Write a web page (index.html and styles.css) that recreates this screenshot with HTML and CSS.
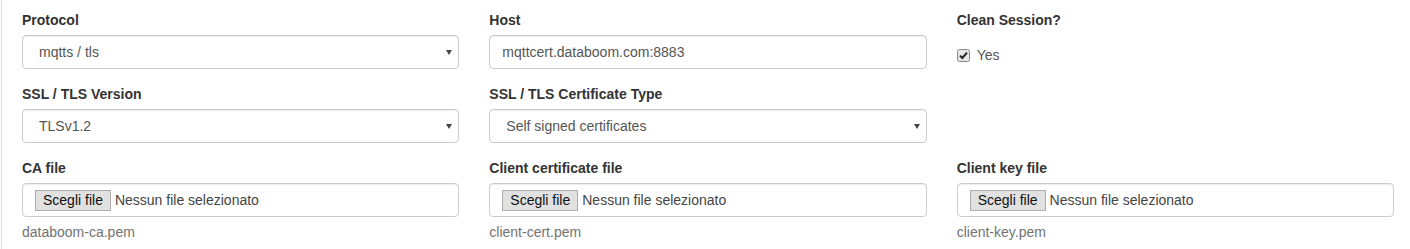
FILE: index.html
```html
<!DOCTYPE html>
<html lang="it">
<head>
<meta charset="utf-8">
<title>MQTT connection</title>
<link rel="stylesheet" href="styles.css">
</head>
<body>
<div class="panel">
  <form class="grid">
    <div class="form-group">
      <label class="control-label">Protocol</label>
      <div class="select-wrap">
        <select class="form-control"><option>mqtts / tls</option></select>
      </div>
    </div>
    <div class="form-group">
      <label class="control-label">Host</label>
      <input class="form-control" type="text" value="mqttcert.databoom.com:8883">
    </div>
    <div class="form-group">
      <label class="control-label">Clean Session?</label>
      <div class="checkbox">
        <label class="check-label">
          <span class="check-box"><svg width="13" height="13" viewBox="0 0 13 13"><rect x="0.5" y="0.5" width="12" height="12" rx="2" fill="#e5e5e5" stroke="#8a8a8a"/><path d="M3 6.6 L5.3 9 L10 3.6" fill="none" stroke="#222" stroke-width="2"/></svg></span>
          Yes
        </label>
      </div>
    </div>

    <div class="form-group">
      <label class="control-label">SSL / TLS Version</label>
      <div class="select-wrap">
        <select class="form-control"><option>TLSv1.2</option></select>
      </div>
    </div>
    <div class="form-group">
      <label class="control-label">SSL / TLS Certificate Type</label>
      <div class="select-wrap">
        <select class="form-control"><option>Self signed certificates</option></select>
      </div>
    </div>
    <div class="form-group"></div>

    <div class="form-group">
      <label class="control-label">CA file</label>
      <div class="form-control file-control">
        <button type="button" class="file-btn">Scegli file</button>
        <span class="file-name">Nessun file selezionato</span>
      </div>
      <p class="help-block">databoom-ca.pem</p>
    </div>
    <div class="form-group">
      <label class="control-label">Client certificate file</label>
      <div class="form-control file-control">
        <button type="button" class="file-btn">Scegli file</button>
        <span class="file-name">Nessun file selezionato</span>
      </div>
      <p class="help-block">client-cert.pem</p>
    </div>
    <div class="form-group">
      <label class="control-label">Client key file</label>
      <div class="form-control file-control">
        <button type="button" class="file-btn">Scegli file</button>
        <span class="file-name">Nessun file selezionato</span>
      </div>
      <p class="help-block">client-key.pem</p>
    </div>
  </form>
</div>
</body>
</html>
```
FILE: styles.css
```css
* { box-sizing: border-box; }

html, body {
  margin: 0;
  padding: 0;
  background: #fff;
}

body {
  font-family: "Liberation Sans", Arial, Helvetica, sans-serif;
  font-size: 14px;
  line-height: 20px;
  color: #333;
  padding-left: 1px;
}

.panel {
  border-left: 1px solid #dddddd;
  min-height: 249px;
  padding: 10px 16px 0 20px;
}

.grid {
  display: grid;
  grid-template-columns: repeat(3, 1fr);
  column-gap: 30px;
  margin: 0;
}

.form-group {
  margin-bottom: 15px;
}

.control-label {
  display: block;
  font-weight: bold;
  margin-bottom: 5px;
  line-height: 20px;
}

.form-control {
  display: block;
  width: 100%;
  height: 34px;
  padding: 6px 12px;
  font-family: inherit;
  font-size: 14px;
  line-height: 20px;
  color: #555;
  background: #fff;
  border: 1px solid #ccc;
  border-radius: 4px;
  box-shadow: inset 0 1px 1px rgba(0,0,0,0.075);
  margin: 0;
}

.select-wrap {
  position: relative;
}

.select-wrap select {
  -webkit-appearance: none;
  appearance: none;
  padding-left: 16px;
}

.select-wrap::after {
  content: "";
  position: absolute;
  right: 7px;
  top: 15px;
  border-style: solid;
  border-width: 5px 3.5px 0 3.5px;
  border-color: #444 transparent transparent transparent;
  pointer-events: none;
}

.checkbox {
  margin-top: 15px;
}

.check-label {
  display: flex;
  align-items: center;
  gap: 7px;
  font-weight: normal;
  color: #555;
  line-height: 20px;
}

.check-box {
  display: flex;
  width: 13px;
  height: 13px;
}

.file-control {
  display: flex;
  align-items: center;
  gap: 4px;
  padding: 0 12px;
}

.file-btn {
  height: 21px;
  padding: 0 7px;
  font-family: inherit;
  font-size: 14px;
  color: #111;
  background: #e1e1e1;
  border: 1px solid #adadad;
  border-radius: 0;
  margin: 0;
  line-height: 19px;
}

.file-name {
  color: #444;
}

.help-block {
  margin: 5px 0 0 0;
  color: #737373;
  line-height: 20px;
}
```
